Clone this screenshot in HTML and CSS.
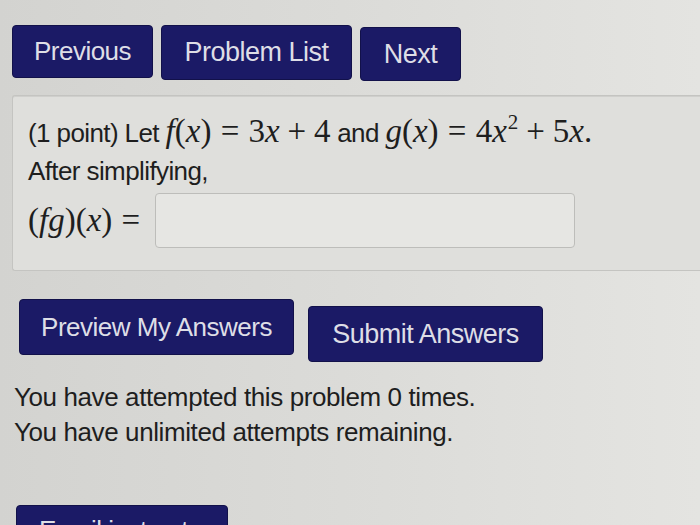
FILE: index.html
```html
<!DOCTYPE html>
<html>
<head>
<meta charset="utf-8">
<link rel="stylesheet" href="styles.css">
</head>
<body>
<div class="page">
  <div class="nav">
    <button class="btn btn-prev">Previous</button>
    <button class="btn btn-list">Problem List</button>
    <button class="btn btn-next">Next</button>
  </div>

  <div class="problem">
    <p class="line">(1 point) Let <span class="math"><i>f</i>(<i>x</i>)<span class="rel">=</span>3<i>x</i><span class="bin">+</span>4</span> and <span class="math"><i>g</i>(<i>x</i>)<span class="rel">=</span>4<i>x</i><sup>2</sup><span class="bin">+</span>5<i>x</i>.</span></p>
    <p class="line">After simplifying,</p>
    <div class="answer-row">
      <span class="math">(<i>f</i><i>g</i>)(<i>x</i>)<span class="rel">=</span></span>
      <input class="answer" type="text">
    </div>
  </div>

  <div class="submit-row">
    <button class="btn btn-preview">Preview My Answers</button>
    <button class="btn btn-submit">Submit Answers</button>
  </div>

  <div class="attempts">
    <p>You have attempted this problem 0 times.</p>
    <p>You have unlimited attempts remaining.</p>
  </div>

  <div class="email-row">
    <button class="btn btn-email">Email instructor</button>
  </div>
</div>
</body>
</html>
```

FILE: styles.css
```css
html, body {
  margin: 0;
  padding: 0;
  height: 100%;
  overflow: hidden;
}
body {
  background: linear-gradient(90deg, #d3d3d0 0%, #dcdcd9 55%, #e4e4e1 100%);
  font-family: "Liberation Sans", Arial, sans-serif;
  color: #1e1e1e;
}
.page {
  padding: 25px 0 0 12px;
}
.nav {
  display: flex;
  gap: 8px;
  align-items: flex-start;
}
.btn {
  background: #1b1a66;
  color: #dedee6;
  border: 1px solid #12114a;
  border-radius: 4px;
  font-family: "Liberation Sans", Arial, sans-serif;
  font-size: 26px;
  letter-spacing: -0.5px;
  padding: 0;
  cursor: pointer;
}
.btn-prev { width: 141px; height: 53px; }
.btn-list { width: 191px; height: 55px; font-size: 27px; }
.btn-next { width: 101px; height: 54px; margin-top: 2px; font-size: 27px; }

.problem {
  margin-top: 14px;
  background: #dfdfdc;
  border: 1px solid #c4c4c1;
  border-right: none;
  border-radius: 3px 0 0 3px;
  padding: 18px 0 0 15px;
  height: 156px;
  box-shadow: inset 0 1px 0 #cfcfcc;
}
.line {
  margin: 0;
  font-size: 26px;
  letter-spacing: -0.6px;
  line-height: 38px;
  white-space: nowrap;
}
.math {
  font-family: "Liberation Serif", "Times New Roman", serif;
  font-size: 33px;
  line-height: 1;
  letter-spacing: 0;
}
.math i {
  font-style: italic;
}
.math .rel {
  padding: 0 0.28em;
}
.math .bin {
  padding: 0 0.24em;
}
.math sup {
  font-size: 21px;
  line-height: 0;
  vertical-align: 13px;
  padding-left: 1px;
}
.answer-row {
  display: flex;
  align-items: center;
  gap: 6px;
  margin-top: 3px;
}
.answer {
  width: 420px;
  height: 55px;
  box-sizing: border-box;
  border: 1px solid #bdbdba;
  border-radius: 4px;
  background: #e6e6e3;
  margin: 0;
}

.submit-row {
  display: flex;
  gap: 14px;
  align-items: flex-start;
  margin-top: 28px;
  padding-left: 7px;
}
.btn-preview { width: 275px; height: 56px; font-size: 26px; }
.btn-submit { width: 235px; height: 56px; margin-top: 7px; font-size: 27px; }

.attempts {
  margin-top: 18px;
  padding-left: 2px;
}
.attempts p {
  margin: 0;
  font-size: 26px;
  letter-spacing: -0.4px;
  line-height: 35px;
  white-space: nowrap;
}

.email-row {
  margin-top: 55px;
  padding-left: 4px;
}
.btn-email {
  width: 212px;
  height: 50px;
  text-align: left;
  padding: 0 0 0 22px;
  vertical-align: top;
}
```
